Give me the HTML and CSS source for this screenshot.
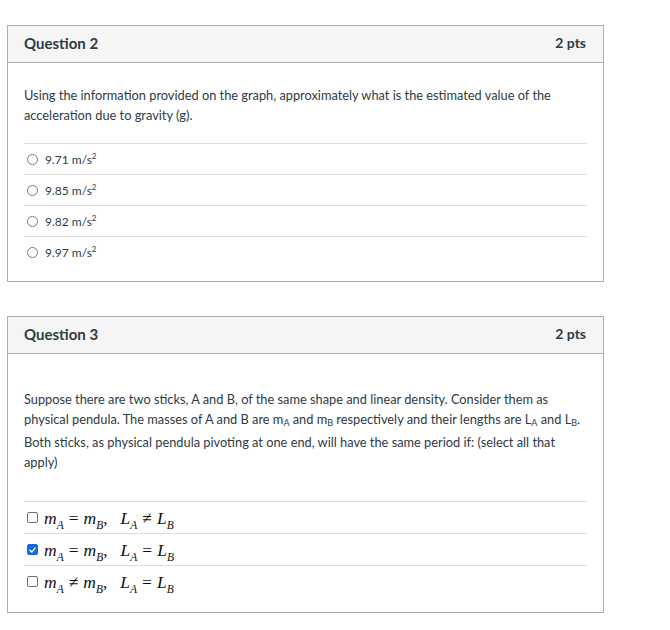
FILE: index.html
```html
<!DOCTYPE html>
<html>
<head>
<meta charset="utf-8">
<link rel="stylesheet" href="styles.css">
</head>
<body>
<div class="page">
  <div class="card">
    <div class="card-header">
      <h2 class="title">Question 2</h2>
      <span class="pts">2 pts</span>
    </div>
    <div class="card-body q2">
      <p class="text">Using the information provided on the graph, approximately what is the estimated value of the acceleration due to gravity (g).</p>
      <div class="answers">
        <div class="answer"><span class="radio"></span><span class="label">9.71 m/s<sup>2</sup></span></div>
        <div class="answer"><span class="radio"></span><span class="label">9.85 m/s<sup>2</sup></span></div>
        <div class="answer"><span class="radio"></span><span class="label">9.82 m/s<sup>2</sup></span></div>
        <div class="answer"><span class="radio"></span><span class="label">9.97 m/s<sup>2</sup></span></div>
      </div>
    </div>
  </div>

  <div class="card">
    <div class="card-header">
      <h2 class="title">Question 3</h2>
      <span class="pts">2 pts</span>
    </div>
    <div class="card-body q3">
      <p class="text">Suppose there are two sticks, A and B, of the same shape and linear density. Consider them as physical pendula. The masses of A and B are m<sub>A</sub> and m<sub>B</sub> respectively and their lengths are L<sub>A</sub> and L<sub>B</sub>.</p>
      <p class="text">Both sticks, as physical pendula pivoting at one end, will have the same period if: (select all that apply)</p>
      <div class="answers checks">
        <div class="answer"><span class="check"></span><span class="math"><i>m</i><sub><i>A</i></sub><span class="op">=</span><i>m</i><sub><i>B</i></sub><span class="comma">,</span><i>L</i><sub><i>A</i></sub><span class="op">≠</span><i>L</i><sub><i>B</i></sub></span></div>
        <div class="answer"><span class="check on"><svg viewBox="0 0 10 10" width="10" height="10"><path d="M2.2 5.2 L4.2 7.2 L7.9 2.9" fill="none" stroke="#fff" stroke-width="1.6" stroke-linecap="round" stroke-linejoin="round"/></svg></span><span class="math"><i>m</i><sub><i>A</i></sub><span class="op">=</span><i>m</i><sub><i>B</i></sub><span class="comma">,</span><i>L</i><sub><i>A</i></sub><span class="op">=</span><i>L</i><sub><i>B</i></sub></span></div>
        <div class="answer"><span class="check"></span><span class="math"><i>m</i><sub><i>A</i></sub><span class="op">≠</span><i>m</i><sub><i>B</i></sub><span class="comma">,</span><i>L</i><sub><i>A</i></sub><span class="op">=</span><i>L</i><sub><i>B</i></sub></span></div>
      </div>
    </div>
  </div>
</div>
</body>
</html>
```

FILE: styles.css
```css
html, body {
  margin: 0;
  padding: 0;
  background: #fff;
}
body {
  font-family: Lato, "Open Sans", sans-serif;
  color: #2d3b45;
}
.page {
  display: flex;
  flex-direction: column;
  gap: 34px;
  padding: 25px 0 0 7px;
  width: 597px;
}
.card {
  border: 1px solid #aeaeae;
  background: #fff;
}
.card-header {
  display: flex;
  align-items: center;
  justify-content: space-between;
  height: 33px;
  padding: 0 17px 3px 16px;
  background: #f5f5f5;
  border-bottom: 1px solid #aeaeae;
}
.title {
  margin: 0;
  font-size: 15px;
  font-weight: 700;
}
.pts {
  font-size: 14px;
  font-weight: 700;
}
.card-body {
  padding: 22px 16px 14px 16px;
}
.card-body.q3 {
  padding-top: 35px;
  padding-bottom: 15px;
}
.text {
  margin: 0 0 3px 0;
  font-size: 12.8px;
  line-height: 20px;
}
.text sub {
  font-size: 9px;
  line-height: 0;
  vertical-align: -2px;
}
.answers {
  margin-top: 18px;
}
.checks {
  margin-top: 29px;
}
.answer {
  display: flex;
  align-items: center;
  height: 30px;
  border-top: 1px solid #dcdcdc;
  padding-left: 3px;
}
.checks .answer {
  height: 31px;
}
.radio {
  width: 9px;
  height: 9px;
  border: 1px solid #7a7a7a;
  border-radius: 50%;
  margin-right: 7px;
  flex: none;
}
.label {
  font-size: 12px;
}
.label sup {
  font-size: 8px;
  line-height: 0;
}
.check {
  width: 9px;
  height: 9px;
  border: 1px solid #6f6f6f;
  border-radius: 2px;
  margin-right: 6px;
  flex: none;
  display: flex;
  align-items: center;
  justify-content: center;
}
.check.on {
  background: #1668e3;
  border-color: #1668e3;
}
.check svg {
  display: block;
}
.math {
  font-family: "Liberation Serif", "DejaVu Serif", serif;
  font-size: 17.5px;
  color: #111;
  padding-top: 2px;
}
.math sub {
  font-size: 11.5px;
  line-height: 0;
}
.op {
  font-style: normal;
  margin: 0 5px;
}
.comma {
  margin-right: 13px;
}
```
